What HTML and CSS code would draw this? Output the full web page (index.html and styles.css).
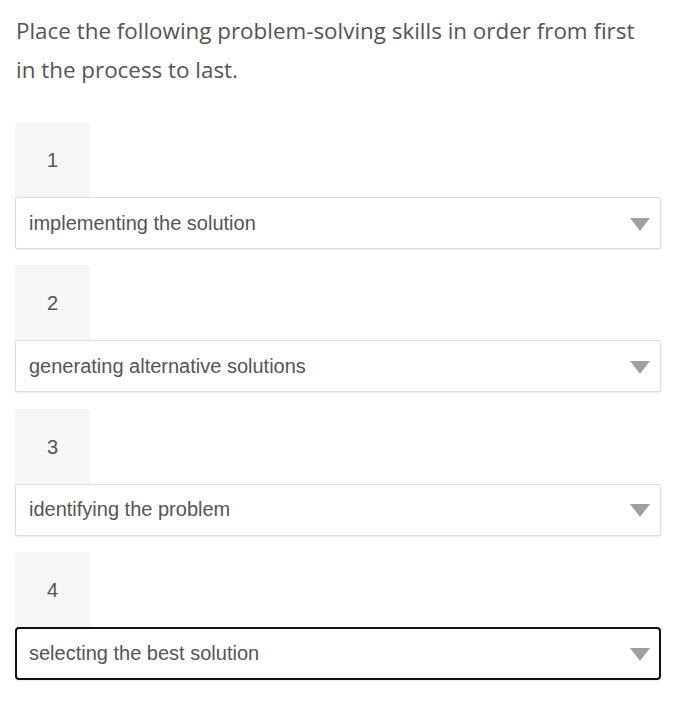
FILE: index.html
```html
<!DOCTYPE html>
<html lang="en">

<head>
    <meta charset="UTF-8">
    <meta name="viewport" content="width=device-width, initial-scale=1.0">
    <title>Order the steps</title>

    <link rel="stylesheet" href="styles.css">
</head>

<body>
    <div class="container">
        <p class="question">Place the following problem-solving skills in order from first in the process to last.</p>

        <div class="item">
            <div class="num">1</div>
            <div class="pick">
                <span>implementing the solution</span>
                <svg class="arrow" width="20" height="13" viewBox="0 0 20 13"><polygon points="0,0 20,0 10,13" /></svg>
            </div>
        </div>
        <div class="item">
            <div class="num">2</div>
            <div class="pick">
                <span>generating alternative solutions</span>
                <svg class="arrow" width="20" height="13" viewBox="0 0 20 13"><polygon points="0,0 20,0 10,13" /></svg>
            </div>
        </div>
        <div class="item">
            <div class="num">3</div>
            <div class="pick">
                <span>identifying the problem</span>
                <svg class="arrow" width="20" height="13" viewBox="0 0 20 13"><polygon points="0,0 20,0 10,13" /></svg>
            </div>
        </div>
        <div class="item">
            <div class="num">4</div>
            <div class="pick focus">
                <span>selecting the best solution</span>
                <svg class="arrow" width="20" height="13" viewBox="0 0 20 13"><polygon points="0,0 20,0 10,13" /></svg>
            </div>
        </div>
    </div>
</body>
</html>
```

FILE: styles.css
```css
body {
    margin: 0;
    background: #fff;
}

.container {
    padding: 11px 19px 0 15px;
}

.question {
    font-family: "Open Sans", sans-serif;
    font-size: 22.4px;
    line-height: 39px;
    color: #555;
    margin: 0 0 33px 1px;
    max-width: 630px;
}

.item {
    display: flex;
    flex-direction: column;
    align-items: flex-start;
    margin-bottom: 16.4px;
}

.num {
    width: 75px;
    height: 75px;
    background: #f6f6f6;
    border-radius: 3px 3px 0 0;
    display: flex;
    align-items: center;
    justify-content: center;
    font-family: "Liberation Sans", Arial, sans-serif;
    font-size: 20px;
    color: #555;
    padding-top: 2px;
    box-sizing: border-box;
}

.pick {
    align-self: stretch;
    height: 50px;
    border: 1px solid #ddd;
    border-radius: 2px;
    box-shadow: 0 1px 2px rgba(0, 0, 0, 0.08);
    display: flex;
    align-items: center;
    justify-content: space-between;
    padding: 0 10px 0 13px;
    font-family: "Liberation Sans", Arial, sans-serif;
    font-size: 20px;
    color: #555;
}

.pick.focus {
    border: 2px solid #111;
    border-radius: 4px;
    height: 49px;
    padding: 0 9px 0 12px;
}

.arrow {
    fill: #a0a0a0;
    margin-top: 2px;
}
```
